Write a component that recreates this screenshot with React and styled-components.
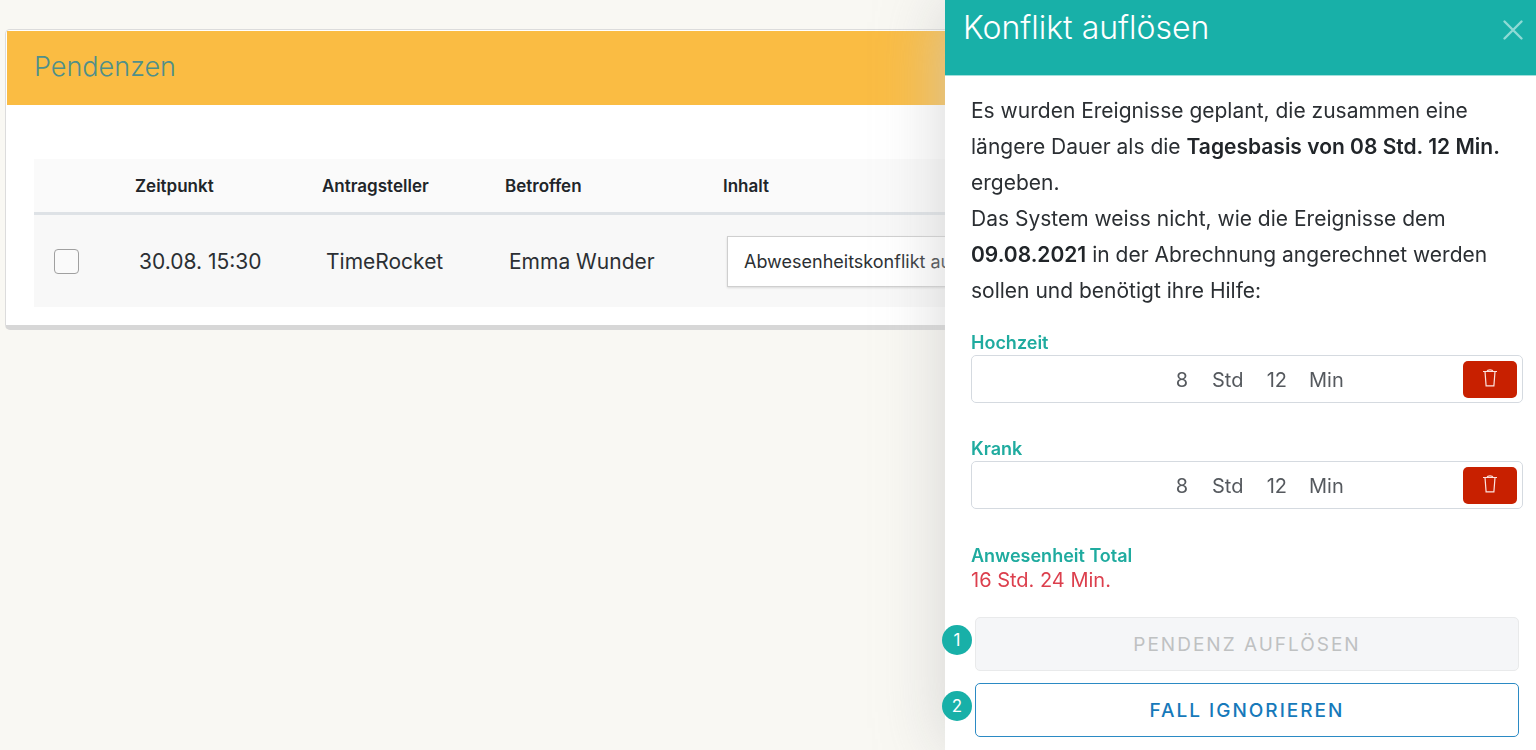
import React from "react";
import styled, { createGlobalStyle } from "styled-components";

const teal = "#18b0a8";

const GlobalStyle = createGlobalStyle`
  *, *::before, *::after { box-sizing: border-box; }
  body {
    margin: 0;
    background: #f9f8f3;
    color: #2b2f33;
    font-family: Inter, "Liberation Sans", sans-serif;
    font-size: 21px;
    overflow: hidden;
  }
  button, input { font-family: inherit; }
`;

const Page = styled.main`
  padding: 29px 5px 0;
`;

const Card = styled.section`
  background: #fff;
  border: 1px solid #dcdcdc;
  border-bottom: 5px solid #d7d7d7;
  border-radius: 5px;
  padding: 1px 0 18px 1px;
  overflow: hidden;
`;

const CardHeader = styled.header`
  background: #fabc43;
  height: 74px;
  padding: 0 27px 2px;
  display: flex;
  align-items: center;
`;

const CardTitle = styled.h2`
  margin: 0;
  font-size: 27px;
  line-height: 36px;
  font-weight: 300;
  color: #4f8f8a;
`;

const TableWrap = styled.div`
  margin: 54px 27px 0;
`;

const Table = styled.table`
  width: 100%;
  table-layout: fixed;
  border-collapse: separate;
  border-spacing: 0;
`;

const Th = styled.th`
  width: ${(p) => p.$width || "auto"};
  height: 56px;
  padding: 0;
  text-align: left;
  font-size: 17px;
  font-weight: 600;
  color: #212529;
  background: #fafafa;
  border-bottom: 3px solid #dee2e6;
`;

const Td = styled.td`
  height: 92px;
  padding: 0 4px;
  background: #f8f8f8;
  white-space: nowrap;
`;

const CheckCell = styled(Td)`
  padding: 0 20px;
`;

const Checkbox = styled.input`
  appearance: none;
  display: block;
  width: 25px;
  height: 25px;
  margin: 0;
  background: #fafafa;
  border: 1px solid #a0a0a0;
  border-radius: 4px;
`;

const ContentButton = styled.button`
  display: block;
  height: 51px;
  width: 300px;
  padding: 0 16px;
  text-align: left;
  font-size: 18px;
  color: #2b2f33;
  background: #fff;
  border: 1px solid #cfcfcf;
  box-shadow: 0 1px 2px rgba(0, 0, 0, 0.12);
`;

const Drawer = styled.aside`
  position: fixed;
  top: 0;
  right: 0;
  bottom: 0;
  width: 591px;
  background: #fff;
  box-shadow: 0 0 64px rgba(200, 200, 200, 0.75);
`;

const DrawerHeader = styled.header`
  display: flex;
  align-items: flex-start;
  justify-content: space-between;
  height: 76px;
  padding: 8px 12px 0 18px;
  background: ${teal};
  border-bottom: 1px solid #a3dfdc;
`;

const DrawerTitle = styled.h1`
  margin: 0;
  font-size: 32px;
  line-height: 40px;
  font-weight: 300;
  color: #fff;
`;

const CloseButton = styled.button`
  display: flex;
  align-items: center;
  height: 44px;
  padding: 0;
  border: 0;
  background: none;
  color: #8fdad5;
`;

const DrawerBody = styled.div`
  padding: 17px 13px 0 26px;
`;

const Text = styled.p`
  margin: 0;
  line-height: 36px;
  strong { font-weight: 600; color: #212529; }
`;

const Fields = styled.div`
  display: grid;
  gap: 34px;
  margin-top: 22px;
`;

const Field = styled.div`
  display: grid;
`;

const Label = styled.label`
  font-size: 18px;
  line-height: 24px;
  font-weight: 600;
  color: #1fab9f;
`;

const Duration = styled.div`
  display: flex;
  align-items: center;
  height: 48px;
  padding: 0 5px 0 188px;
  border: 1px solid #d5dae0;
  border-radius: 5px;
  color: #55595e;
`;

const NumberInput = styled.input`
  width: 28px;
  padding: 2px 0 0;
  border: 0;
  background: none;
  text-align: right;
  font-size: 20px;
  line-height: 24px;
  color: inherit;
`;

const Unit = styled.span`
  width: 47px;
  margin-left: 24px;
  padding-top: 2px;
  font-size: 20px;
  line-height: 24px;
  &:last-of-type { margin-left: 22px; }
`;

const DeleteButton = styled.button`
  display: flex;
  align-items: center;
  justify-content: center;
  width: 54px;
  height: 37px;
  margin-left: auto;
  padding: 0 0 2px;
  border: 0;
  border-radius: 5px;
  background: #c82000;
  color: #fbe3df;
`;

const Total = styled.div`
  display: grid;
  margin-top: 35px;
`;

const TotalLabel = styled(Label).attrs({ as: "span" })``;

const TotalValue = styled.span`
  font-size: 20px;
  line-height: 24px;
  color: #dc3f4d;
`;

const Actions = styled.div`
  display: grid;
  gap: 12px;
  margin-top: 25px;
  padding: 0 4px;
`;

const ActionRow = styled.div`
  position: relative;
  display: grid;
`;

const ActionButton = styled.button`
  height: 54px;
  border: 1px solid ${(p) => (p.disabled ? "#e9eaeb" : "#2b8ac4")};
  border-radius: 5px;
  background: ${(p) => (p.disabled ? "#f5f6f8" : "#fff")};
  color: ${(p) => (p.disabled ? "#bfc1c2" : "#1679ba")};
  font-size: 19px;
  font-weight: ${(p) => (p.disabled ? 400 : 500)};
  letter-spacing: 2px;
  text-transform: uppercase;
`;

const Badge = styled.span`
  position: absolute;
  top: 8px;
  left: -33px;
  width: 30px;
  height: 30px;
  border-radius: 50%;
  background: ${teal};
  color: #fff;
  font-size: 17px;
  line-height: 30px;
  text-align: center;
`;

const TrashIcon = () => (
  <svg width="16" height="20" viewBox="0 0 16 20" fill="none" stroke="currentColor" strokeWidth="1.2" aria-hidden="true">
    <path d="M1 3.500h14M5 3.500c.3-1.300 1.300-1.700 3-1.700s2.700.4 3 1.700M3 3.500l1.100 14.300h7.800L13 3.500" />
  </svg>
);

const CloseIcon = () => (
  <svg width="22" height="22" viewBox="0 0 22 22" fill="none" stroke="currentColor" strokeWidth="2.4" strokeLinecap="round" aria-hidden="true">
    <path d="M2.500 2.500l17 17M19.500 2.500l-17 17" />
  </svg>
);

function DurationField({ id, label }) {
  return (
    <Field>
      <Label htmlFor={id}>{label}</Label>
      <Duration>
        <NumberInput id={id} defaultValue="8" />
        <Unit>Std</Unit>
        <NumberInput aria-label={`${label} Minuten`} defaultValue="12" />
        <Unit>Min</Unit>
        <DeleteButton type="button" aria-label={`${label} löschen`}>
          <TrashIcon />
        </DeleteButton>
      </Duration>
    </Field>
  );
}

export default function App() {
  return (
    <>
      <GlobalStyle />
      <Page>
        <Card>
          <CardHeader>
            <CardTitle>Pendenzen</CardTitle>
          </CardHeader>
          <TableWrap>
            <Table>
              <thead>
                <tr>
                  <Th $width="101px" aria-label="Auswahl" />
                  <Th $width="187px">Zeitpunkt</Th>
                  <Th $width="183px">Antragsteller</Th>
                  <Th $width="218px">Betroffen</Th>
                  <Th>Inhalt</Th>
                </tr>
              </thead>
              <tbody>
                <tr>
                  <CheckCell>
                    <Checkbox type="checkbox" aria-label="Pendenz auswählen" />
                  </CheckCell>
                  <Td>30.08. 15:30</Td>
                  <Td>TimeRocket</Td>
                  <Td>Emma Wunder</Td>
                  <Td>
                    <ContentButton type="button">Abwesenheitskonflikt auflösen</ContentButton>
                  </Td>
                </tr>
              </tbody>
            </Table>
          </TableWrap>
        </Card>
      </Page>
      <Drawer>
        <DrawerHeader>
          <DrawerTitle>Konflikt auflösen</DrawerTitle>
          <CloseButton type="button" aria-label="Schliessen">
            <CloseIcon />
          </CloseButton>
        </DrawerHeader>
        <DrawerBody>
          <Text>
            Es wurden Ereignisse geplant, die zusammen eine längere Dauer als die{" "}
            <strong>Tagesbasis von 08 Std. 12 Min.</strong> ergeben.
          </Text>
          <Text>
            Das System weiss nicht, wie die Ereignisse dem <strong>09.08.2021</strong> in der
            Abrechnung angerechnet werden sollen und benötigt ihre Hilfe:
          </Text>
          <Fields>
            <DurationField id="hochzeit" label="Hochzeit" />
            <DurationField id="krank" label="Krank" />
          </Fields>
          <Total>
            <TotalLabel>Anwesenheit Total</TotalLabel>
            <TotalValue>16 Std. 24 Min.</TotalValue>
          </Total>
          <Actions>
            <ActionRow>
              <Badge>1</Badge>
              <ActionButton type="button" disabled>Pendenz auflösen</ActionButton>
            </ActionRow>
            <ActionRow>
              <Badge>2</Badge>
              <ActionButton type="button">Fall ignorieren</ActionButton>
            </ActionRow>
          </Actions>
        </DrawerBody>
      </Drawer>
    </>
  );
}
